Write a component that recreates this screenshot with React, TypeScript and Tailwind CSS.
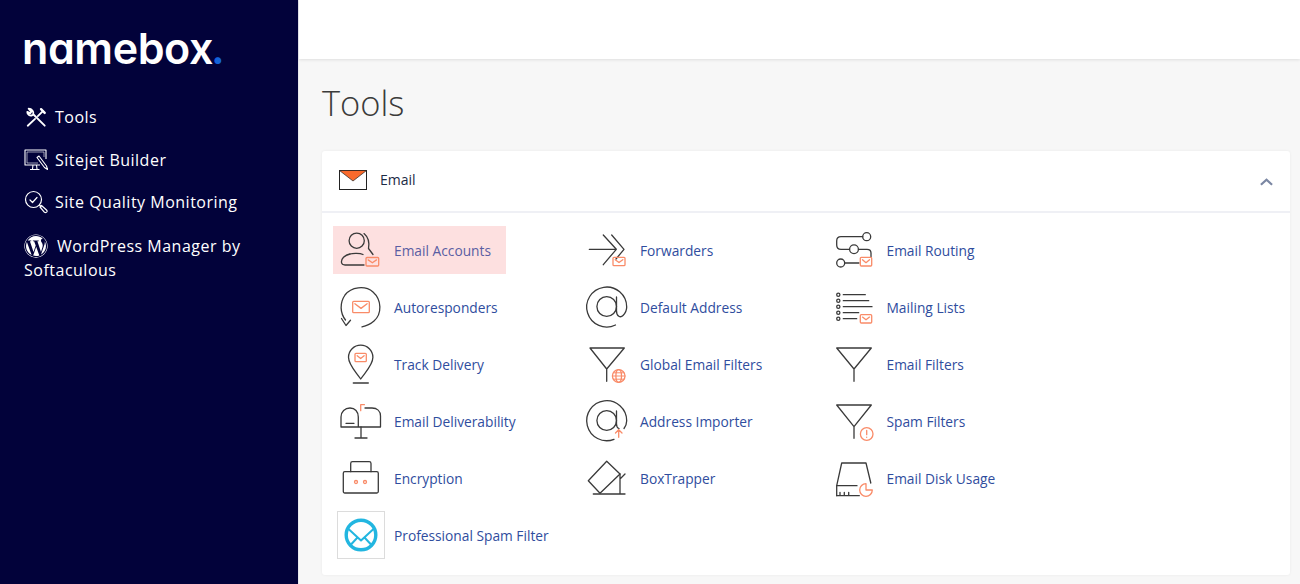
import React from "react";
import { FaWordpress } from "react-icons/fa";

const D = "#3a3a3a";
const O = "#f98b68";

function Mail({ x, y, w = 11.7, h = 8.5 }: { x: number; y: number; w?: number; h?: number }) {
  return (
    <g stroke={O} fill="none" strokeWidth="1.3" strokeLinejoin="round">
      <rect x={x} y={y} width={w} height={h} rx="1" />
      <path d={`M${x + 2.2} ${y + 2.4} L${x + w / 2} ${y + h * 0.62} L${x + w - 2.2} ${y + 2.4}`} />
    </g>
  );
}

function Ico({ children }: { children: React.ReactNode }) {
  return (
    <svg viewBox="0 0 48 48" width="48" height="48" fill="none" stroke={D} strokeWidth="1.3" strokeLinecap="round" strokeLinejoin="round" className="shrink-0">
      {children}
    </svg>
  );
}

const icons: Record<string, React.ReactNode> = {
  accounts: (
    <>
      <circle cx="19.7" cy="14.7" r="7.6" />
      <path d="M27 7.6C31 11 32.5 17 31.5 22.5L36 28.5" />
      <path d="M13 28C7.5 29 4 33 4.5 36.5C4.8 38.5 6 39 8 39H27" />
      <path d="M13 28C16 27 23 27 26 28.5" />
      <Mail x={29} y={31.5} w={12.7} />
    </>
  ),
  auto: (
    <>
      <path d="M8.5 37C3 30 2.500 20 8 12C14 4 28 2 36 9C45 17 45 31 37 38C33 41.500 29 43 25 43.800" />
      <path d="M4.500 35.500L9 42.500L13.500 37.300" />
      <Mail x={15.7} y={18.3} w={16.6} h={11.4} />
    </>
  ),
  track: (
    <>
      <path d="M23.700 39C19 32 11.500 25 11.500 17.300A12.200 12.200 0 0 1 35.900 17.300C35.900 25 28.500 32 23.700 39Z" />
      <path d="M16.300 43H31.300" />
      <Mail x={18} y={13.3} w={11.3} h={8.4} />
    </>
  ),
  deliver: (
    <>
      <path d="M21.300 30V20C21.300 14.500 18 11 13 11C8 11 4 14.500 4 20V30H43.500V19C43.500 14 40 11 35 11H28" />
      <path d="M9 26.300H17M24 30V41M18 41H30" />
      <path d="M23.700 13.700V7.700H27.400" stroke={O} />
    </>
  ),
  encrypt: (
    <>
      <rect x="6.300" y="17.700" width="35" height="21.300" rx="1.500" />
      <path d="M13.700 17.700V9.500Q13.700 7.700 15.500 7.700H32.200Q34 7.700 34 9.500V17.700" />
      <circle cx="19" cy="28" r="1.500" stroke={O} />
      <circle cx="28" cy="28" r="1.500" stroke={O} />
    </>
  ),
  spam: null,
  forward: (
    <>
      <path d="M6.300 23.300H33M20.300 9L33.300 23.300L20.300 38.700M28.700 9L41 23.300L33 33" />
      <Mail x={30} y={31.3} w={12} h={8.400} />
    </>
  ),
  at: (
    <>
      <circle cx="23.700" cy="23.500" r="9.800" />
      <path d="M33.500 14V28C33.500 33.500 37.500 35 40 32.500C42.500 30 43.700 27 43.700 24A20 20 0 1 0 32.500 42" />
    </>
  ),
  globalf: (
    <>
      <path d="M7 8H41.300L23.700 29ZM23.700 29V41.300" />
      <g stroke={O}>
        <circle cx="35.700" cy="36" r="6.300" />
        <ellipse cx="35.700" cy="36" rx="2.800" ry="6.300" />
        <path d="M29.400 36H42M30.500 32.800H40.900M30.500 39.200H40.900" strokeWidth="1" />
      </g>
    </>
  ),
  importer: (
    <>
      <circle cx="23.700" cy="23.500" r="9.800" />
      <path d="M33.500 14V27C33.500 30 34.500 31 36 31.500M41 31.500C42.800 29 43.700 26.500 43.700 23.700A20 20 0 1 0 31 42.300" />
      <path d="M35.700 40.300V32.700M32.500 36L35.700 32.700L39 36" stroke={O} />
    </>
  ),
  boxtrap: (
    <>
      <path d="M23.700 7.300L37 20L17 39.300L5.300 26.700Z" />
      <path d="M10.300 40H42M37 20V40M37 25L42 20" />
    </>
  ),
  routing: (
    <>
      <circle cx="36.700" cy="10.700" r="4" />
      <path d="M32.700 10.700H11Q6.700 10.700 6.700 15V19Q6.700 23.300 11 23.300H19.500" />
      <circle cx="24" cy="23.300" r="4.400" />
      <path d="M28.500 23.300H37Q41 23.300 41 27V31" />
      <circle cx="10.700" cy="37" r="4" />
      <path d="M14.700 37H29" />
      <Mail x={30.300} y={31.300} w={11.400} h={8.700} />
    </>
  ),
  lists: (
    <>
      {[11.7, 17.7, 23.7, 29.7, 35.7].map((y) => (
        <circle key={y} cx="8.300" cy={y} r="1.600" />
      ))}
      <path d="M13.300 11.700H35.300M13.300 17.700H38.700M13.300 23.700H42M13.300 29.700H28.700M13.300 35.700H26.700" />
      <Mail x={30.300} y={31.700} w={11.400} h={8.300} />
    </>
  ),
  filters: <path d="M6.700 8H41.300L24 29ZM24 29V41.300" />,
  spamf: (
    <>
      <path d="M6.700 8H41.300L24 29.700ZM24 29.700V41.300" />
      <g stroke={O}>
        <circle cx="36.700" cy="37" r="6.300" />
        <path d="M36.700 33.500V37.700M36.700 40.200V40.300" />
      </g>
    </>
  ),
  disk: (
    <>
      <path d="M6.700 41.700V31.700L11.700 9H36L40.800 29" />
      <path d="M6.700 31.700H27M6.700 41.700H29.300M10 38.300V41M14.300 38.300V41M18.700 38.300V41" />
      <path d="M36 36H42.300A6.300 6.300 0 1 1 36 29.700Z" stroke={O} />
    </>
  ),
};

function SpamLogo() {
  return (
    <div className="w-12 h-12 shrink-0 border border-[#dcdcdc] bg-white">
      <svg viewBox="0 0 46 46" width="46" height="46" fill="none" stroke="#22b6e0" strokeLinejoin="round">
        <circle cx="23" cy="23" r="14.800" strokeWidth="3.400" />
        <path d="M10.500 17L23 28.500L35.500 17M13 32.500L19.500 25.500M33 32.500L26.500 25.500" strokeWidth="2" />
      </svg>
    </div>
  );
}

const items: [string, string][] = [
  ["accounts", "Email Accounts"], ["forward", "Forwarders"], ["routing", "Email Routing"],
  ["auto", "Autoresponders"], ["at", "Default Address"], ["lists", "Mailing Lists"],
  ["track", "Track Delivery"], ["globalf", "Global Email Filters"], ["filters", "Email Filters"],
  ["deliver", "Email Deliverability"], ["importer", "Address Importer"], ["spamf", "Spam Filters"],
  ["encrypt", "Encryption"], ["boxtrap", "BoxTrapper"], ["disk", "Email Disk Usage"],
  ["spam", "Professional Spam Filter"],
];

function Side({ icon, label }: { icon: React.ReactNode; label: string }) {
  return (
    <a className="flex items-center h-[42.5px] gap-[7px] text-white">
      <span className="w-6 flex justify-center shrink-0">{icon}</span>
      <span>{label}</span>
    </a>
  );
}

export default function App() {
  return (
    <div className="flex h-[584px] w-[1300px] overflow-hidden bg-[#f7f7f7] font-['Open_Sans',sans-serif]">
      <aside className="w-[299px] shrink-0 bg-[#02023a] border-r border-[#e8e8ee] px-6 text-[16px] tracking-[0.5px]">
        <div className="h-[96px] pt-[22px] -ml-[2px] text-white font-['Inter',sans-serif] font-semibold text-[43px] leading-[52px] tracking-[-0.4px] [font-feature-settings:'cv11']">
          namebox<span className="-ml-[2px] text-[#1463d8]">.</span>
        </div>
        <nav className="flex flex-col">
          <Side
            label="Tools"
            icon={
              <svg viewBox="0 0 24 24" width="22" height="22" fill="none" stroke="#fff" strokeWidth="2" strokeLinecap="round" strokeLinejoin="round">
                <path d="M3 21.500L11 14M14 11L19.500 5.500" />
                <path d="M17.500 3.500L21.500 7.500" strokeWidth="2.600" />
                <path d="M21.500 21.500L9 9C9.800 6 7.500 3 4 3L6.800 6.300L5.800 8L2.500 6.500C2.500 9.500 5.500 11.300 8 10" />
              </svg>
            }
          />
          <Side
            label="Sitejet Builder"
            icon={
              <svg viewBox="0 0 24 24" width="24" height="24" fill="none" stroke="#fff" strokeWidth="1.100" strokeLinejoin="round">
                <path d="M22 11V2H1V17H16M9 17L8.500 21M12.500 17L13 21M6 21.500H15.500" />
                <path d="M3 4H20V9M3 4V15H14" strokeWidth="0.600" />
                <path d="M13 9.500L15 8L22.500 18L23.500 21.500L20.500 19.500Z" />
              </svg>
            }
          />
          <Side
            label="Site Quality Monitoring"
            icon={
              <svg viewBox="0 0 24 24" width="24" height="24" fill="none" stroke="#fff" strokeWidth="1.200" strokeLinecap="round" strokeLinejoin="round">
                <circle cx="9.500" cy="9.500" r="8" />
                <path d="M6 10L8.500 12.500L13 7.500" />
                <path d="M15.500 15L17 16.500M17 16L16 17L20.500 22.300Q22 23 22.800 22Q23.500 21 22.500 20L17.500 15.500Z" />
              </svg>
            }
          />
        </nav>
        <p className="mt-[10px] leading-[24px] text-white">
          <FaWordpress className="inline-block align-[-6px] mr-[9px] text-[24px]" />
          WordPress Manager by Softaculous
        </p>
      </aside>
      <main className="flex-1 flex flex-col min-w-0">
        <header className="h-[59px] bg-white shadow-[0_1px_3px_rgba(0,0,0,0.1)]" />
        <div className="pl-[23px] pr-[10px]">
          <h1 className="mt-[20px] h-[72px] text-[34.500px] leading-[48px] font-light text-[#3b3b3b]">Tools</h1>
          <section className="bg-white rounded-[3px] shadow-[0_0_3px_rgba(0,0,0,0.06)] h-[424px]">
            <div className="h-[62px] flex items-center pl-[17px] pr-[17px] pb-[4px] border-b-2 border-[#eff0f5]">
              <svg viewBox="0 0 28 20" width="28" height="20" className="shrink-0 translate-y-[1px]">
                <rect x="0.500" y="0.500" width="27" height="19" fill="#fff" stroke="#222" />
                <path d="M0.500 0.500H27.500L14 11Z" fill="#f96a2c" stroke="#222" strokeWidth="0.700" />
              </svg>
              <span className="ml-[13px] text-[14px] text-[#1c2b45] flex-1">Email</span>
              <svg viewBox="0 0 14 8" width="13" height="8" fill="none" stroke="#7b87a3" strokeWidth="2.400" className="translate-y-[3px]">
                <path d="M1 7L7 1.500L13 7" />
              </svg>
            </div>
            <div className="grid grid-cols-[246px_246.500px_246px] gap-y-[9px] pl-[11px] pt-[13px]">
              {items.map(([k, label], i) => (
                <a key={k} className={`flex items-center h-12 pl-1 pr-[15px] justify-self-start text-[13.750px] ${i === 0 ? "bg-[#fde0e0] text-[#5a5ea3]" : "text-[#2f4d9e]"}`}>
                  {k === "spam" ? <SpamLogo /> : <Ico>{icons[k]}</Ico>}
                  <span className="ml-[9px] pt-[3px] whitespace-nowrap">{label}</span>
                </a>
              ))}
            </div>
          </section>
        </div>
      </main>
    </div>
  );
}
